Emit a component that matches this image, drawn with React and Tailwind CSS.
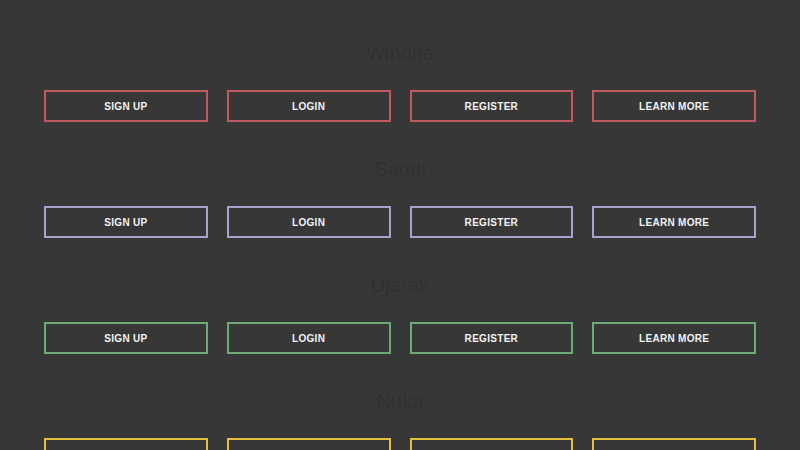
const sections = [
  { title: "Winona", border: "border-[#c05a60]" },
  { title: "Saqui", border: "border-[#a8a2cc]" },
  { title: "Ujarak", border: "border-[#6cab74]" },
  { title: "Nuka", border: "border-[#e6c03c]" },
];

const labels = ["Sign up", "Login", "Register", "Learn more"];

export default function App() {
  return (
    <div
      className="w-[800px] h-[450px] overflow-hidden bg-[#373737] px-[44px] pt-[39px]"
      style={{ fontFamily: '"Liberation Sans", Arial, sans-serif' }}
    >
      {sections.map((s) => (
        <section key={s.title} className="pb-[33px]">
          <h2 className="h-7 leading-7 text-center text-[20px] text-[#303030] font-normal">
            {s.title}
          </h2>
          <div className="mt-[23px] grid grid-cols-4 gap-[19px]">
            {labels.map((l) => (
              <button
                key={l}
                className={`h-[32px] border-2 ${s.border} bg-transparent text-[#f2f2f2] text-[10px] font-bold uppercase tracking-[0.03em]`}
              >
                {l}
              </button>
            ))}
          </div>
        </section>
      ))}
    </div>
  );
}
